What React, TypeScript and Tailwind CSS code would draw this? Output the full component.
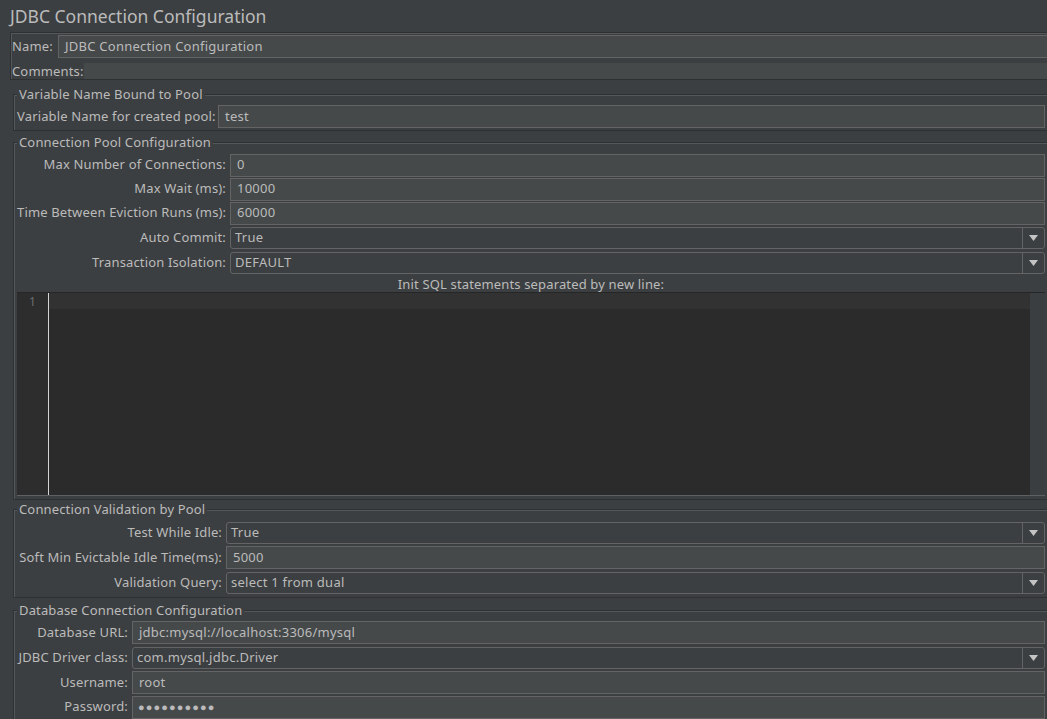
import React from "react";

const FONT = { fontFamily: '"Noto Sans", "Open Sans", sans-serif' };

function TextField({ value, className = "" }: { value: string; className?: string }) {
  return (
    <div
      className={
        "flex-1 h-[23px] bg-[#45494a] border border-[#646464] pl-[6px] flex items-center text-[13px] tracking-[0.25px] text-[#bbbbbb] whitespace-nowrap overflow-hidden " +
        className
      }
    >
      {value}
    </div>
  );
}

function Combo({ value }: { value: string }) {
  return (
    <div className="flex-1 h-[22px] bg-[#3c3f41] border border-[#646464] rounded-[3px] flex items-stretch text-[13px] tracking-[0.25px] text-[#bbbbbb]">
      <div className="flex-1 pl-[4px] flex items-center whitespace-nowrap overflow-hidden">{value}</div>
      <div className="w-[22px] border-l border-[#646464] flex items-center justify-center">
        <svg width="9" height="6" viewBox="0 0 9 6">
          <path d="M0 0 L9 0 L4.5 6 Z" fill="#c4c4c4" />
        </svg>
      </div>
    </div>
  );
}

function Row({
  label,
  labelW,
  h,
  children,
}: {
  label: string;
  labelW: string;
  h: string;
  children: React.ReactNode;
}) {
  return (
    <div className={"flex items-center " + h}>
      <div className={"text-right pr-[4px] whitespace-nowrap text-[13px] tracking-[0.15px] " + labelW}>{label}</div>
      {children}
    </div>
  );
}

function Group({
  title,
  className = "",
  children,
}: {
  title: string;
  className?: string;
  children: React.ReactNode;
}) {
  return (
    <fieldset
      className={
        "ml-[13px] w-[1036px] border border-[#2e3032] shadow-[inset_1px_1px_0_#55585a] pl-[3px] pr-[3px] " +
        className
      }
    >
      <legend className="px-[2px] h-[16px] leading-[16px] text-[13px] tracking-[0.15px] bg-[#3c3f41] whitespace-nowrap">
        {title}
      </legend>
      {children}
    </fieldset>
  );
}

export default function App() {
  return (
    <div
      className="w-[1047px] h-[719px] overflow-hidden bg-[#3c3f41] text-[#bbbbbb]"
      style={FONT}
    >
      <div className="w-[1060px]">
        {/* Title */}
        <div className="h-[32px] pl-[10px] flex items-center text-[17.5px] leading-none pt-[2px]">
          JDBC Connection Configuration
        </div>

        {/* Name / Comments panel */}
        <div className="ml-[10px] w-[1045px] h-[48px] border border-[#2e3032] shadow-[inset_1px_1px_0_#55585a] pt-[2px]">
          <div className="flex items-center h-[23px]">
            <div className="w-[47px] pl-[1px] text-[13px] tracking-[0.15px]">Name:</div>
            <TextField value="JDBC Connection Configuration" />
          </div>
          <div className="flex items-center h-[16px] mt-[5px]">
            <div className="w-[73px] pl-[1px] text-[13px] tracking-[0.15px] leading-[16px]">Comments:</div>
            <div className="flex-1 h-[16px] bg-[#45494a]" />
          </div>
        </div>

        {/* Variable Name Bound to Pool */}
        <Group title="Variable Name Bound to Pool" className="mt-[6px] pt-[3px] pb-[2px]">
          <Row label="Variable Name for created pool:" labelW="w-[201px]" h="h-[23px]">
            <TextField value="test" />
          </Row>
        </Group>

        {/* Connection Pool Configuration */}
        <Group title="Connection Pool Configuration" className="mt-[3px] pt-[3px] pb-[3px]">
          <Row label="Max Number of Connections:" labelW="w-[213px]" h="h-[24px]">
            <TextField value="0" />
          </Row>
          <Row label="Max Wait (ms):" labelW="w-[213px]" h="h-[24px]">
            <TextField value="10000" />
          </Row>
          <Row label="Time Between Eviction Runs (ms):" labelW="w-[213px]" h="h-[24px]">
            <TextField value="60000" />
          </Row>
          <Row label="Auto Commit:" labelW="w-[213px]" h="h-[25px]">
            <Combo value="True" />
          </Row>
          <Row label="Transaction Isolation:" labelW="w-[213px]" h="h-[25px]">
            <Combo value="DEFAULT" />
          </Row>
          <div className="mt-[1px] h-[16px] leading-[16px] text-[13px] tracking-[0.15px] text-center">
            Init SQL statements separated by new line:
          </div>
          <div className="h-[204px] border-t border-[#262626] border-b border-b-[#5e6163] flex">
            <div className="w-[31px] bg-[#2d2d2d] flex justify-center pt-[1px]">
              <span className="text-[12px] leading-[16px] text-[#6a6d70]">1</span>
            </div>
            <div className="w-[1px] bg-[#d4d4d4]" />
            <div className="flex-1 bg-[#2b2b2b]">
              <div className="h-[16px] bg-[#323232]" />
            </div>
            <div className="w-[15px] bg-[#3b3e40]" />
          </div>
        </Group>

        {/* Connection Validation by Pool */}
        <Group title="Connection Validation by Pool" className="mt-[1px] pt-[3px] pb-[2px]">
          <Row label="Test While Idle:" labelW="w-[209px]" h="h-[25px]">
            <Combo value="True" />
          </Row>
          <Row label="Soft Min Evictable Idle Time(ms):" labelW="w-[209px]" h="h-[25px]">
            <TextField value="5000" />
          </Row>
          <Row label="Validation Query:" labelW="w-[209px]" h="h-[25px]">
            <Combo value="select 1 from dual" />
          </Row>
        </Group>

        {/* Database Connection Configuration */}
        <Group title="Database Connection Configuration" className="mt-[4px] pt-[2px] pb-[2px]">
          <Row label="Database URL:" labelW="w-[115px]" h="h-[25px]">
            <TextField value="jdbc:mysql://localhost:3306/mysql" />
          </Row>
          <Row label="JDBC Driver class:" labelW="w-[115px]" h="h-[25px]">
            <Combo value="com.mysql.jdbc.Driver" />
          </Row>
          <Row label="Username:" labelW="w-[115px]" h="h-[25px]">
            <TextField value="root" />
          </Row>
          <Row label="Password:" labelW="w-[115px]" h="h-[24px]">
            <div className="flex-1 h-[23px] bg-[#45494a] border border-[#646464] pl-[5px] flex items-center text-[11px] tracking-[1.1px] text-[#bbbbbb]">
              ●●●●●●●●●●
            </div>
          </Row>
        </Group>
      </div>
    </div>
  );
}
